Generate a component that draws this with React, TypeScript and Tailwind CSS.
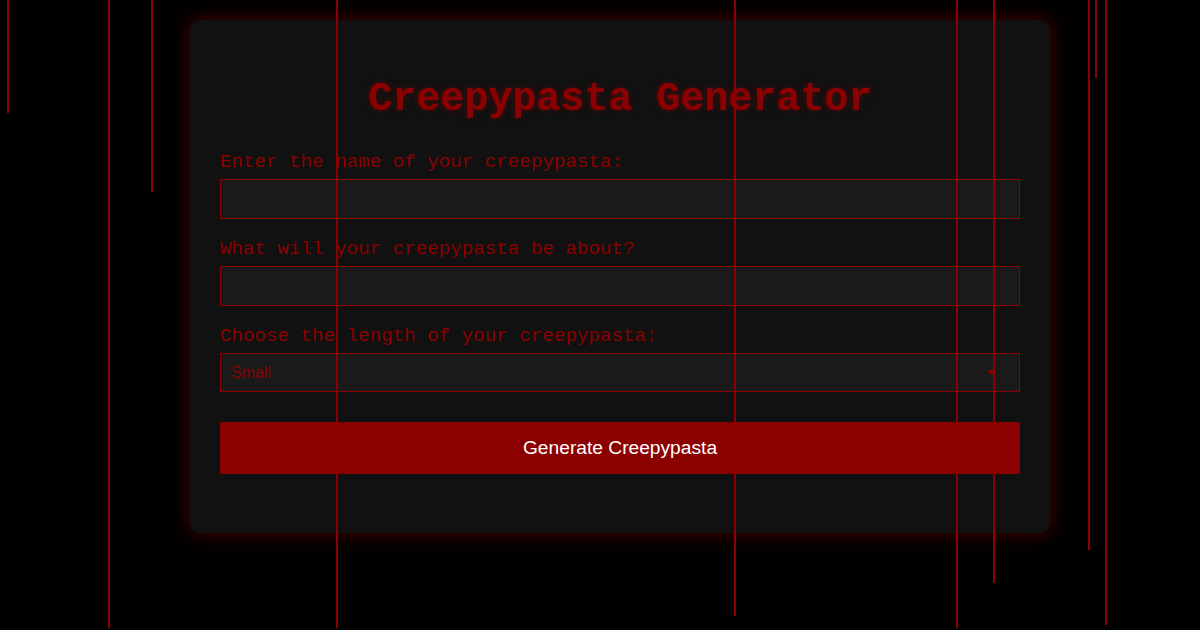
import React from 'react';

// blood drips running down over the page: x position and length in px
const drips = [
  { left: 7, height: 113 },
  { left: 108, height: 628 },
  { left: 151, height: 192 },
  { left: 336, height: 628 },
  { left: 734, height: 616 },
  { left: 956, height: 628 },
  { left: 993, height: 583 },
  { left: 1088, height: 550 },
  { left: 1095, height: 78 },
  { left: 1105, height: 625 },
];

const mono = "font-['Liberation_Mono','Courier_New',monospace]";

const Field: React.FC<{ label: string; children: React.ReactNode }> = ({ label, children }) => (
  <div className="flex flex-col">
    <label className={`${mono} text-[19.2px] leading-6 text-[#8b0000] mb-[5px]`}>{label}</label>
    {children}
  </div>
);

const App: React.FC = () => {
  return (
    <div className="relative w-full h-[630px] bg-black overflow-hidden">
      <div className="pl-10 pt-5">
        <div className="w-[860px] h-[513px] mx-auto bg-[#111111] rounded-[10px] shadow-[0_0_20px_rgba(139,0,0,0.55)] px-[30px] pt-[24px]">
          <h1
            className={`${mono} font-bold text-[40px] leading-[48px] text-center text-[#8b0000] [text-shadow:0_0_6px_rgba(139,0,0,0.5)] mt-[32px]`}
          >
            Creepypasta Generator
          </h1>

          <div className="mt-[26px] flex flex-col gap-[18px]">
            <Field label="Enter the name of your creepypasta:">
              <input
                type="text"
                className="h-10 w-full bg-[#1a1a1a] border border-[#8b0000] outline-none px-2.5 text-[#8b0000]"
              />
            </Field>
            <Field label="What will your creepypasta be about?">
              <input
                type="text"
                className="h-10 w-full bg-[#1a1a1a] border border-[#8b0000] outline-none px-2.5 text-[#8b0000]"
              />
            </Field>
            <Field label="Choose the length of your creepypasta:">
              <div className="relative">
                <select
                  defaultValue="small"
                  className="appearance-none h-[39px] w-full bg-[#1a1a1a] border border-[#8b0000] outline-none pl-2.5 font-['Liberation_Sans',Arial,sans-serif] text-base text-[#8b0000]"
                >
                  <option value="small">Small</option>
                  <option value="medium">Medium</option>
                  <option value="large">Large</option>
                </select>
                <svg
                  className="absolute right-[24px] top-[17px] pointer-events-none"
                  width="9"
                  height="5"
                  viewBox="0 0 9 5"
                >
                  <path d="M0 0h9L4.5 5z" fill="#8b0000" />
                </svg>
              </div>
            </Field>
          </div>

          <button
            type="button"
            className="mt-[30px] w-full h-[52px] bg-[#8b0000] text-white font-['Liberation_Sans',Arial,sans-serif] text-[19.2px]"
          >
            Generate Creepypasta
          </button>
        </div>
      </div>

      {drips.map((d) => (
        <div
          key={d.left}
          className="absolute top-0 w-[2px] bg-[#8b0000] pointer-events-none"
          style={{ left: d.left, height: d.height }}
        />
      ))}
    </div>
  );
};

export default App;
